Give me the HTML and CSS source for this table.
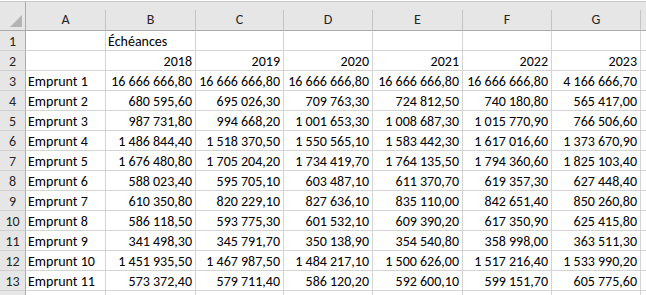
FILE: index.html
```html
<!DOCTYPE html>
<html lang="fr">
<head>
<meta charset="utf-8">
<title>Échéances</title>
<link rel="stylesheet" href="styles.css">
</head>
<body>
<div class="sheet">
  <div class="topline"></div>
  <div class="grid">
    <div class="corner"><span class="tri"></span></div>
    <div class="ch">A</div><div class="ch">B</div><div class="ch">C</div><div class="ch">D</div><div class="ch">E</div><div class="ch">F</div><div class="ch">G</div><div class="ch end"></div>

    <div class="rh">1</div><div class="c"></div><div class="c txt">Échéances</div><div class="c"></div><div class="c"></div><div class="c"></div><div class="c"></div><div class="c"></div><div class="c"></div>
    <div class="rh">2</div><div class="c"></div><div class="c">2018</div><div class="c">2019</div><div class="c">2020</div><div class="c">2021</div><div class="c">2022</div><div class="c">2023</div><div class="c"></div>
    <div class="rh">3</div><div class="c txt">Emprunt 1</div><div class="c">16 666 666,80</div><div class="c">16 666 666,80</div><div class="c">16 666 666,80</div><div class="c">16 666 666,80</div><div class="c">16 666 666,80</div><div class="c">4 166 666,70</div><div class="c"></div>
    <div class="rh">4</div><div class="c txt">Emprunt 2</div><div class="c">680 595,60</div><div class="c">695 026,30</div><div class="c">709 763,30</div><div class="c">724 812,50</div><div class="c">740 180,80</div><div class="c">565 417,00</div><div class="c"></div>
    <div class="rh">5</div><div class="c txt">Emprunt 3</div><div class="c">987 731,80</div><div class="c">994 668,20</div><div class="c">1 001 653,30</div><div class="c">1 008 687,30</div><div class="c">1 015 770,90</div><div class="c">766 506,60</div><div class="c"></div>
    <div class="rh">6</div><div class="c txt">Emprunt 4</div><div class="c">1 486 844,40</div><div class="c">1 518 370,50</div><div class="c">1 550 565,10</div><div class="c">1 583 442,30</div><div class="c">1 617 016,60</div><div class="c">1 373 670,90</div><div class="c"></div>
    <div class="rh">7</div><div class="c txt">Emprunt 5</div><div class="c">1 676 480,80</div><div class="c">1 705 204,20</div><div class="c">1 734 419,70</div><div class="c">1 764 135,50</div><div class="c">1 794 360,60</div><div class="c">1 825 103,40</div><div class="c"></div>
    <div class="rh">8</div><div class="c txt">Emprunt 6</div><div class="c">588 023,40</div><div class="c">595 705,10</div><div class="c">603 487,10</div><div class="c">611 370,70</div><div class="c">619 357,30</div><div class="c">627 448,40</div><div class="c"></div>
    <div class="rh">9</div><div class="c txt">Emprunt 7</div><div class="c">610 350,80</div><div class="c">820 229,10</div><div class="c">827 636,10</div><div class="c">835 110,00</div><div class="c">842 651,40</div><div class="c">850 260,80</div><div class="c"></div>
    <div class="rh">10</div><div class="c txt">Emprunt 8</div><div class="c">586 118,50</div><div class="c">593 775,30</div><div class="c">601 532,10</div><div class="c">609 390,20</div><div class="c">617 350,90</div><div class="c">625 415,80</div><div class="c"></div>
    <div class="rh">11</div><div class="c txt">Emprunt 9</div><div class="c">341 498,30</div><div class="c">345 791,70</div><div class="c">350 138,90</div><div class="c">354 540,80</div><div class="c">358 998,00</div><div class="c">363 511,30</div><div class="c"></div>
    <div class="rh">12</div><div class="c txt">Emprunt 10</div><div class="c">1 451 935,50</div><div class="c">1 467 987,50</div><div class="c">1 484 217,10</div><div class="c">1 500 626,00</div><div class="c">1 517 216,40</div><div class="c">1 533 990,20</div><div class="c"></div>
    <div class="rh">13</div><div class="c txt">Emprunt 11</div><div class="c">573 372,40</div><div class="c">579 711,40</div><div class="c">586 120,20</div><div class="c">592 600,10</div><div class="c">599 151,70</div><div class="c">605 775,60</div><div class="c"></div>
    <div class="rh"></div><div class="c"></div><div class="c"></div><div class="c"></div><div class="c"></div><div class="c"></div><div class="c"></div><div class="c"></div><div class="c"></div>
  </div>
</div>
</body>
</html>
```

FILE: styles.css
```css
html, body {
  margin: 0;
  padding: 0;
  background: #ffffff;
  overflow: hidden;
}
.sheet {
  width: 646px;
  height: 295px;
  overflow: hidden;
  font-family: "Carlito", "Liberation Sans", Arial, sans-serif;
  font-size: 14px;
  color: #000;
}
.topline {
  height: 1px;
  margin-top: 1px;
  background: #c8c8c8;
}
.grid {
  display: grid;
  grid-template-columns: 26px 80px 90px 88px 89px 90px 89px 89px 6px;
  grid-template-rows: 29px repeat(13, 20px) 20px;
  background: #e6e6e6;
}
.grid > div {
  box-sizing: border-box;
  white-space: nowrap;
  overflow: hidden;
}
.corner {
  border-right: 1px solid #ababab;
  border-bottom: 1px solid #ababab;
  position: relative;
  background: #e6e6e6;
}
.tri {
  position: absolute;
  right: 3px;
  bottom: 3px;
  width: 0;
  height: 0;
  border-left: 12px solid transparent;
  border-bottom: 12px solid #b4b4b4;
}
.grid > .ch {
  display: flex;
  align-items: center;
  justify-content: center;
  height: 21px;
  align-self: end;
  padding-bottom: 1px;
  color: #262626;
  border-right: 1px solid #c4c4c4;
  border-bottom: 1px solid #ababab;
}
.grid > .ch.end {
  border-right: none;
}
.rh {
  display: flex;
  align-items: center;
  justify-content: center;
  color: #262626;
  background: #e6e6e6;
  border-right: 1px solid #ababab;
  border-bottom: 1px solid #d0d0d0;
  padding-top: 1px;
}
.c {
  background: #ffffff;
  border-right: 1px solid #d4d4d4;
  border-bottom: 1px solid #d4d4d4;
  text-align: right;
  padding: 2px 3px 0 2px;
  line-height: 17px;
}
.grid > .c.txt {
  text-align: left;
  overflow: visible;
}
```
